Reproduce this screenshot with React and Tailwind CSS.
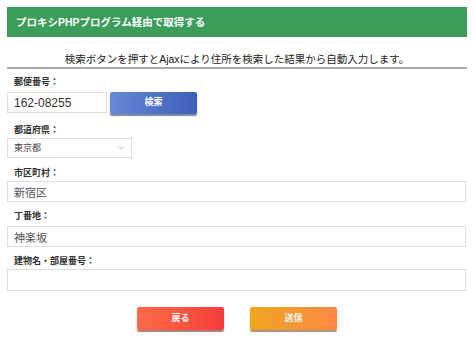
import React, { useState } from 'react';
import { ChevronDown } from 'lucide-react';

const font = { fontFamily: '"Liberation Sans", "Noto Sans CJK JP", sans-serif' };

const Label = ({ children, className = '' }) => (
  <div className={`h-[10px] flex items-center pl-[7px] text-[9px] font-bold leading-none text-[#333] ${className}`}>
    {children}
  </div>
);

const App = () => {
  const [zip, setZip] = useState('162-08255');
  const [pref] = useState('東京都');
  const [city, setCity] = useState('新宿区');
  const [street, setStreet] = useState('神楽坂');
  const [building, setBuilding] = useState('');

  return (
    <div className="w-[474px] h-[345px] bg-white px-[7px] pt-[7px]" style={font}>
      {/* Header */}
      <div className="h-[30px] bg-[#3b9d59] flex items-center pl-[9px]">
        <h1 className="text-[10.5px] font-bold text-white leading-none">プロキシPHPプログラム経由で取得する</h1>
      </div>

      <p className="mt-[17px] h-[11px] text-center text-[10.5px] text-[#222] leading-[11px]">
        検索ボタンを押すとAjaxにより住所を検索した結果から自動入力します。
      </p>
      <div className="mt-[2px] h-[2px] bg-[#a9a9a9]" />

      {/* Zip */}
      <Label className="mt-[8px]">郵便番号：</Label>
      <div className="mt-[5px] flex items-start gap-[3px]">
        <input
          value={zip}
          onChange={(e) => setZip(e.target.value)}
          className="w-[100px] h-[21px] border border-[#ddd] px-[6px] text-[12px] text-[#333] outline-none"
        />
        <button className="w-[87px] h-[22px] rounded-[2px] bg-gradient-to-r from-[#6688d8] to-[#3d5fb8] text-white text-[9px] font-bold shadow-[0_2px_1px_rgba(40,50,90,0.6)]">
          検索
        </button>
      </div>

      {/* Prefecture */}
      <Label className="mt-[11px]">都道府県：</Label>
      <div className="relative mt-[3px] w-[125px] h-[20px] border border-[#ddd] flex items-center px-[6px]">
        <span className="text-[9px] text-[#444] leading-none">{pref}</span>
        <ChevronDown size={10} strokeWidth={1.5} className="absolute right-[5px] top-[4px] text-[#999]" />
      </div>

      {/* City */}
      <Label className="mt-[10px]">市区町村：</Label>
      <input
        value={city}
        onChange={(e) => setCity(e.target.value)}
        className="mt-[3px] block w-[459px] h-[21px] border border-[#ddd] px-[6px] text-[11px] text-[#555] outline-none"
      />

      {/* Street */}
      <Label className="mt-[9px]">丁番地：</Label>
      <input
        value={street}
        onChange={(e) => setStreet(e.target.value)}
        className="mt-[5px] block w-[459px] h-[21px] border border-[#ddd] px-[6px] text-[11px] text-[#555] outline-none"
      />

      {/* Building */}
      <Label className="mt-[9px]">建物名・部屋番号：</Label>
      <input
        value={building}
        onChange={(e) => setBuilding(e.target.value)}
        className="mt-[3px] block w-[459px] h-[22px] border border-[#ddd] px-[6px] text-[11px] text-[#555] outline-none"
      />

      {/* Buttons */}
      <div className="mt-[16px] flex justify-center gap-[26px]">
        <button className="w-[87px] h-[23px] rounded-[2px] bg-gradient-to-r from-[#ff6a48] to-[#f53c3c] text-white text-[9px] font-bold shadow-[0_2px_1px_rgba(110,40,40,0.6)]">
          戻る
        </button>
        <button className="w-[87px] h-[23px] rounded-[2px] bg-gradient-to-r from-[#eea51e] to-[#ff8844] text-white text-[9px] font-bold shadow-[0_2px_1px_rgba(110,70,40,0.6)]">
          送信
        </button>
      </div>
    </div>
  );
};

export default App;
